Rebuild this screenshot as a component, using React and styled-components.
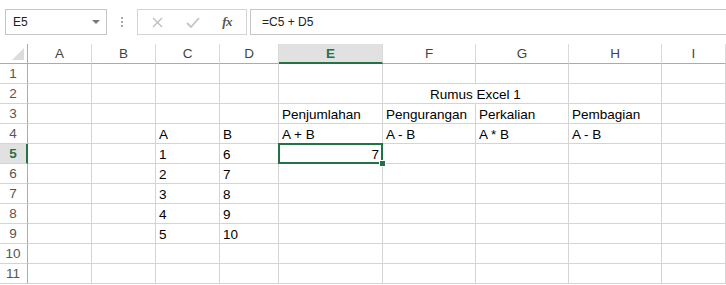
import React from "react";
import styled, { createGlobalStyle } from "styled-components";

const GlobalStyle = createGlobalStyle`
  html, body {
    margin: 0;
    padding: 0;
    background: #fff;
    overflow: hidden;
  }
  body {
    font-family: "Liberation Sans", Arial, sans-serif;
  }
`;

const Page = styled.div`
  width: 726px;
  height: 285px;
  overflow: hidden;
  background: #fff;
`;

const FormulaBar = styled.div`
  height: 44px;
  box-sizing: border-box;
  padding: 9px 0 0 5px;
  display: flex;
  align-items: flex-start;
`;

const NameBox = styled.div`
  width: 102px;
  height: 26px;
  box-sizing: border-box;
  border: 1px solid #c6c6c6;
  display: flex;
  align-items: center;
  justify-content: space-between;
  padding: 0 6px 0 7px;
  font-size: 12px;
  color: #222;
`;

const Caret = styled.span`
  width: 0;
  height: 0;
  border-left: 4px solid transparent;
  border-right: 4px solid transparent;
  border-top: 4px solid #777;
`;

const Grip = styled.div`
  width: 30px;
  height: 26px;
  display: flex;
  flex-direction: column;
  align-items: center;
  justify-content: center;
  gap: 2px;

  span {
    width: 2px;
    height: 2px;
    background: #a8a8a8;
  }
`;

const ActionBox = styled.div`
  width: 110px;
  height: 26px;
  box-sizing: border-box;
  border: 1px solid #d4d4d4;
  display: flex;
  align-items: center;
  padding: 0 14px 0 14px;
  justify-content: space-between;
`;

const Fx = styled.span`
  font-family: "Liberation Serif", "Times New Roman", serif;
  font-style: italic;
  font-weight: bold;
  font-size: 13px;
  color: #555;
  letter-spacing: -0.5px;
`;

const FormulaInput = styled.div`
  flex: 1;
  margin-left: 3px;
  height: 26px;
  box-sizing: border-box;
  border: 1px solid #c6c6c6;
  border-right: none;
  display: flex;
  align-items: center;
  padding-left: 11px;
  font-size: 12px;
  color: #222;
`;

const Sheet = styled.div`
  display: grid;
  grid-template-columns: 28px 64px 64px 64px 59px 104px 93px 93px 93px 64px;
  grid-auto-rows: 20px;
  font-size: 13.5px;
`;

const Corner = styled.div`
  box-sizing: border-box;
  border-right: 1px solid #ababab;
  border-bottom: 1px solid #ababab;
  position: relative;

  &::after {
    content: "";
    position: absolute;
    right: 3px;
    bottom: 3px;
    width: 12px;
    height: 12px;
    background: #dcdcdc;
    clip-path: polygon(100% 0, 100% 100%, 0 100%);
  }
`;

const ColHead = styled.div`
  box-sizing: border-box;
  display: flex;
  align-items: center;
  justify-content: center;
  border-right: 1px solid #dadada;
  border-bottom: ${(p) => (p.$active ? "2px solid #217346" : "1px solid #ababab")};
  background: ${(p) => (p.$active ? "#e1e1e1" : "#fff")};
  color: ${(p) => (p.$active ? "#217346" : "#444")};
  font-weight: ${(p) => (p.$active ? "bold" : "normal")};
  line-height: 16px;
  padding-top: ${(p) => (p.$active ? "1px" : "0")};
`;

const RowHead = styled.div`
  box-sizing: border-box;
  display: flex;
  align-items: center;
  justify-content: center;
  border-right: ${(p) => (p.$active ? "2px solid #217346" : "1px solid #ababab")};
  border-bottom: 1px solid #d4d4d4;
  background: ${(p) => (p.$active ? "#e1e1e1" : "#fff")};
  color: ${(p) => (p.$active ? "#217346" : "#555")};
  font-weight: ${(p) => (p.$active ? "bold" : "normal")};
  padding-right: ${(p) => (p.$active ? "0" : "1px")};
`;

const Cell = styled.div`
  box-sizing: border-box;
  border-right: 1px solid #d4d4d4;
  border-bottom: 1px solid #d4d4d4;
  display: flex;
  align-items: flex-end;
  justify-content: ${(p) =>
    p.$align === "right" ? "flex-end" : p.$align === "center" ? "center" : "flex-start"};
  padding: 0 3px 0 3px;
  line-height: 16px;
  color: #000;
  white-space: nowrap;
  grid-column: ${(p) => (p.$span ? `span ${p.$span}` : "auto")};
  position: ${(p) => (p.$selected ? "relative" : "static")};
  z-index: ${(p) => (p.$selected ? 1 : "auto")};

  ${(p) =>
    p.$selected &&
    `
    &::after {
      content: "";
      position: absolute;
      top: -1px;
      left: -1px;
      right: -1px;
      bottom: -1px;
      border: 2px solid #217346;
    }
    &::before {
      content: "";
      position: absolute;
      right: -4px;
      bottom: -4px;
      width: 5px;
      height: 5px;
      background: #217346;
      border: 1px solid #fff;
      z-index: 2;
    }
  `}
`;

const columns = ["A", "B", "C", "D", "E", "F", "G", "H", "I"];

// cell contents per row: { col: [text, align, span] }
const data = {
  2: { F: ["Rumus Excel 1", "center", 2] },
  3: { E: ["Penjumlahan"], F: ["Pengurangan"], G: ["Perkalian"], H: ["Pembagian"] },
  4: { C: ["A"], D: ["B"], E: ["A + B"], F: ["A - B"], G: ["A * B"], H: ["A - B"] },
  5: { C: ["1"], D: ["6"], E: ["7", "right"] },
  6: { C: ["2"], D: ["7"] },
  7: { C: ["3"], D: ["8"] },
  8: { C: ["4"], D: ["9"] },
  9: { C: ["5"], D: ["10"] },
};

const activeCol = "E";
const activeRow = 5;

function CloseIcon() {
  return (
    <svg width="11" height="11" viewBox="0 0 11 11">
      <path d="M1 1 L10 10 M10 1 L1 10" stroke="#bdbdbd" strokeWidth="1.3" fill="none" />
    </svg>
  );
}

function CheckIcon() {
  return (
    <svg width="14" height="11" viewBox="0 0 14 11">
      <path d="M1 6 L5 10 L13 1" stroke="#c4c4c4" strokeWidth="1.8" fill="none" />
    </svg>
  );
}

function SheetRow({ n }) {
  const row = data[n] || {};
  const cells = [];
  let skip = 0;
  columns.forEach((c) => {
    if (skip > 0) {
      skip--;
      return;
    }
    const entry = row[c];
    const span = entry && entry[2];
    if (span) skip = span - 1;
    cells.push(
      <Cell
        key={c}
        $align={entry && entry[1]}
        $span={span}
        $selected={c === activeCol && n === activeRow}
      >
        {entry ? entry[0] : ""}
      </Cell>
    );
  });
  return (
    <>
      <RowHead $active={n === activeRow}>{n}</RowHead>
      {cells}
    </>
  );
}

export default function App() {
  const rows = Array.from({ length: 11 }, (_, i) => i + 1);
  return (
    <Page>
      <GlobalStyle />
      <FormulaBar>
        <NameBox>
          E5
          <Caret />
        </NameBox>
        <Grip>
          <span />
          <span />
          <span />
        </Grip>
        <ActionBox>
          <CloseIcon />
          <CheckIcon />
          <Fx>fx</Fx>
        </ActionBox>
        <FormulaInput>=C5 + D5</FormulaInput>
      </FormulaBar>
      <Sheet>
        <Corner />
        {columns.map((c) => (
          <ColHead key={c} $active={c === activeCol}>
            {c}
          </ColHead>
        ))}
        {rows.map((n) => (
          <SheetRow key={n} n={n} />
        ))}
      </Sheet>
    </Page>
  );
}
